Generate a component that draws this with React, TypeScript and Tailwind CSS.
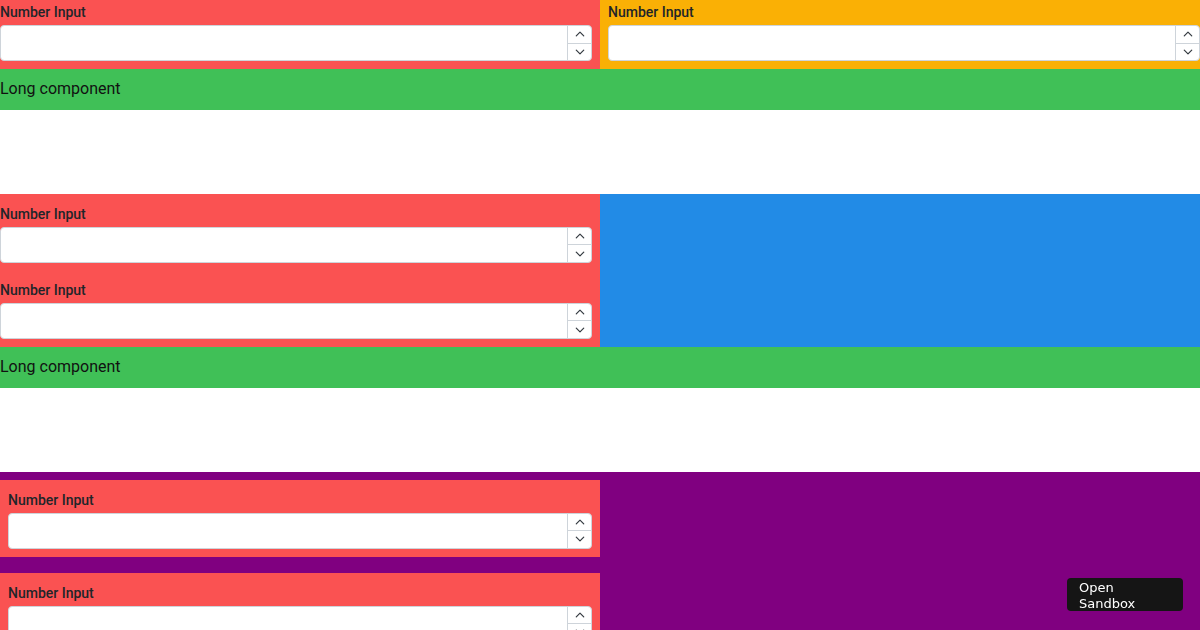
const Chevron = ({ up }: { up?: boolean }) => (
  <svg width="14" height="14" viewBox="0 0 15 15" fill="none" className="text-[#343a40]">
    {up ? (
      <path d="M3.5 9.5L7.5 5.5L11.5 9.5" stroke="currentColor" strokeWidth="1.3" strokeLinecap="round" strokeLinejoin="round" />
    ) : (
      <path d="M3.5 5.5L7.5 9.5L11.5 5.5" stroke="currentColor" strokeWidth="1.3" strokeLinecap="round" strokeLinejoin="round" />
    )}
  </svg>
);

const NumberInput = ({ className = "" }: { className?: string }) => (
  <div className={className}>
    <label className="mb-[1px] block text-[14px] font-medium leading-[24px] text-[#212529]">
      Number Input
    </label>
    <div className="flex h-[36px] overflow-hidden rounded-[4px] border border-[#ced4da] bg-white">
      <input type="text" className="min-w-0 flex-1 bg-transparent px-3 text-[14px] outline-none" />
      <div className="flex w-[24px] flex-col border-l border-[#ced4da]">
        <button className="flex flex-1 items-center justify-center border-b border-[#ced4da]">
          <Chevron up />
        </button>
        <button className="flex flex-1 items-center justify-center">
          <Chevron />
        </button>
      </div>
    </div>
  </div>
);

const LongComponent = () => (
  <div className="bg-[#40c057] py-2 text-[16px] leading-[1.55] text-[#111]">Long component</div>
);

export default function App() {
  return (
    <div className="relative h-[630px] overflow-hidden bg-white font-['Roboto',sans-serif]">
      <div className="flex">
        <div className="w-1/2 bg-[#fa5252] pb-2 pr-2">
          <NumberInput />
        </div>
        <div className="w-1/2 bg-[#fab005] pb-2 pl-2">
          <NumberInput />
        </div>
      </div>
      <LongComponent />
      <div className="h-[84px]" />

      <div className="flex">
        <div className="flex w-1/2 flex-col gap-[15px] bg-[#fa5252] py-2 pr-2">
          <NumberInput />
          <NumberInput />
        </div>
        <div className="w-1/2 bg-[#228be6]" />
      </div>
      <LongComponent />
      <div className="h-[84px]" />

      <div className="flex h-[300px] flex-col gap-4 bg-[#800080] pt-2">
        <div className="w-1/2 bg-[#fa5252] p-2">
          <NumberInput />
        </div>
        <div className="w-1/2 bg-[#fa5252] p-2">
          <NumberInput />
        </div>
      </div>

      <div className="fixed bottom-[19px] right-[17px] flex h-[33px] w-[116px] items-center rounded-[4px] bg-[#151515] pl-3 pt-[2px] font-['DejaVu_Sans',sans-serif] text-[13px] leading-[16px] text-white">
        <span className="w-[80px]">Open Sandbox</span>
      </div>
    </div>
  );
}
